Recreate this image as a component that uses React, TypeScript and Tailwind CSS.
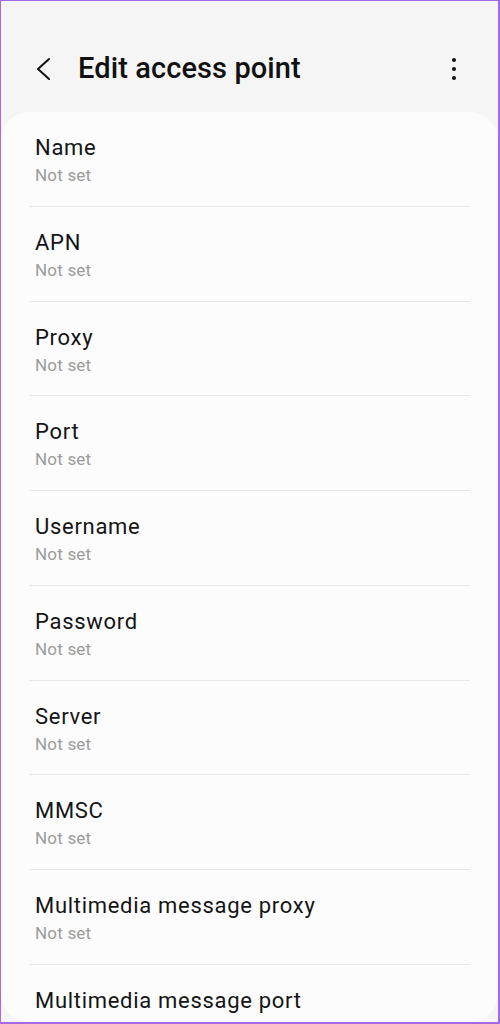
import React from "react";

const fields = [
  "Name",
  "APN",
  "Proxy",
  "Port",
  "Username",
  "Password",
  "Server",
  "MMSC",
  "Multimedia message proxy",
  "Multimedia message port",
];

function Row({ label }: { label: string }) {
  return (
    <div className="mx-[28px] h-[94.75px] shrink-0 border-b border-[#e8e8e8] pl-[6px] pt-[22px]">
      <div className="text-[22px] leading-[28px] tracking-[0.7px] text-[#141414]">{label}</div>
      <div className="mt-[2px] text-[17px] leading-[22px] tracking-[0.2px] text-[#9b9b9b]">Not set</div>
    </div>
  );
}

export default function App() {
  return (
    <div
      className="flex h-[1024px] w-[500px] flex-col overflow-hidden border-t border-l border-r-2 border-b-2 border-[#a867e6] bg-[#f5f5f5]"
      style={{ fontFamily: "Roboto, 'Liberation Sans', sans-serif" }}
    >
      {/* top bar */}
      <div className="flex h-[111px] shrink-0 items-start pt-[46px]">
        <div className="flex h-[44px] w-[77px] items-center pl-[34px]">
          <svg width="16" height="24" viewBox="0 0 16 24" fill="none">
            <path d="M14 2 L3 12 L14 22" stroke="#111" strokeWidth="2" strokeLinecap="round" strokeLinejoin="round" />
          </svg>
        </div>
        <div className="flex h-[44px] items-center text-[29px] font-medium tracking-[0.1px] text-[#111111]">
          Edit access point
        </div>
        <div className="ml-auto mr-[42px] flex h-[44px] flex-col items-center justify-center gap-[5px]">
          <span className="h-[4px] w-[4px] rounded-full bg-[#111]" />
          <span className="h-[4px] w-[4px] rounded-full bg-[#111]" />
          <span className="h-[4px] w-[4px] rounded-full bg-[#111]" />
        </div>
      </div>

      {/* list card */}
      <div className="flex min-h-0 flex-1 flex-col overflow-hidden rounded-[28px] bg-[#fcfcfc]">
        {fields.map((f) => (
          <Row key={f} label={f} />
        ))}
      </div>
    </div>
  );
}
